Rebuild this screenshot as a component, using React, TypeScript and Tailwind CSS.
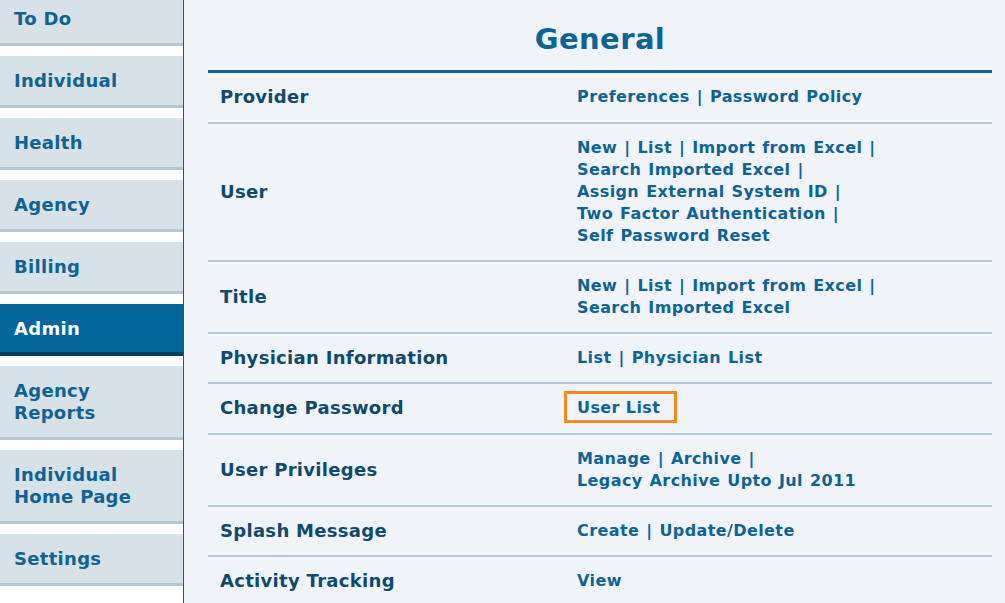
import React from "react";

type NavItem = { label: string[]; active?: boolean };

const navItems: NavItem[] = [
  { label: ["To Do"] },
  { label: ["Individual"] },
  { label: ["Health"] },
  { label: ["Agency"] },
  { label: ["Billing"] },
  { label: ["Admin"], active: true },
  { label: ["Agency", "Reports"] },
  { label: ["Individual", "Home Page"] },
  { label: ["Settings"] },
];

type Row = { label: string; links: string[][]; highlight?: boolean };

const rows: Row[] = [
  { label: "Provider", links: [["Preferences", "Password Policy"]] },
  {
    label: "User",
    links: [
      ["New", "List", "Import from Excel", ""],
      ["Search Imported Excel", ""],
      ["Assign External System ID", ""],
      ["Two Factor Authentication", ""],
      ["Self Password Reset"],
    ],
  },
  {
    label: "Title",
    links: [["New", "List", "Import from Excel", ""], ["Search Imported Excel"]],
  },
  { label: "Physician Information", links: [["List", "Physician List"]] },
  { label: "Change Password", links: [["User List"]], highlight: true },
  {
    label: "User Privileges",
    links: [["Manage", "Archive", ""], ["Legacy Archive Upto Jul 2011"]],
  },
  { label: "Splash Message", links: [["Create", "Update/Delete"]] },
  { label: "Activity Tracking", links: [["View"]] },
];

function SideNav() {
  return (
    <nav className="w-[183px] shrink-0 -mt-[6px] flex flex-col gap-[10px]">
      {navItems.map((item) => (
        <div
          key={item.label.join(" ")}
          className={
            item.active
              ? "bg-[#00669b] border-b-[4px] border-[#003d5b] px-[14px] pt-[14px] pb-[12px] text-white"
              : "bg-[#d7e1e8] border-b-[3px] border-[#b5c7d3] px-[14px] pt-[14px] pb-[13px] text-[#0c6396]"
          }
        >
          {item.label.map((line) => (
            <div key={line} className="text-[18px] leading-[22px] font-bold tracking-[0.3px]">
              {line}
            </div>
          ))}
        </div>
      ))}
    </nav>
  );
}

function LinkLine({ parts }: { parts: string[] }) {
  return (
    <div className="whitespace-nowrap h-[22px]">
      {parts.map((p, i) => (
        <React.Fragment key={i}>
          {i > 0 && <span className="px-[7px]">|</span>}
          {p && <span className="[word-spacing:1px]">{p}</span>}
        </React.Fragment>
      ))}
    </div>
  );
}

export default function App() {
  return (
    <div
      className="flex w-[1005px] h-[603px] overflow-hidden bg-[#f0f4f8]"
      style={{ fontFamily: '"DejaVu Sans", Verdana, sans-serif' }}
    >
      <div className="bg-white border-r border-[#22577c] h-full">
        <SideNav />
      </div>
      <main className="flex-1 pl-[24px] pr-[13px]">
        <h1 className="text-center text-[#0b6497] text-[29px] font-bold leading-[36px] pt-[21px] pb-[13px] tracking-[0.4px]">
          General
        </h1>
        <div className="border-t-[3px] border-[#0a6496]">
          {rows.map((row) => (
            <div
              key={row.label}
              className={`grid grid-cols-[357px_1fr] items-center border-b-2 border-[#b5c7d3] pt-[13px] font-bold tracking-[0.4px] ${
                row.links.length === 1 ? "pb-[13.5px]" : "pb-[13px]"
              }`}
            >
              <div className="px-3 text-[18px] leading-[22px] h-[22px] tracking-[0.3px] text-[#0c4a6e]">
                {row.label}
              </div>
              <div className="px-3 text-[16px] leading-[22px] text-[#0b6497]">
                {row.highlight ? (
                  <div className="relative w-fit h-[22px]">
                    <span className="absolute -left-[13px] -right-[17px] -top-[6px] -bottom-[4px] border-[3px] border-[#f7891f]" />
                    {row.links[0][0]}
                  </div>
                ) : (
                  row.links.map((parts, i) => <LinkLine key={i} parts={parts} />)
                )}
              </div>
            </div>
          ))}
        </div>
      </main>
    </div>
  );
}
